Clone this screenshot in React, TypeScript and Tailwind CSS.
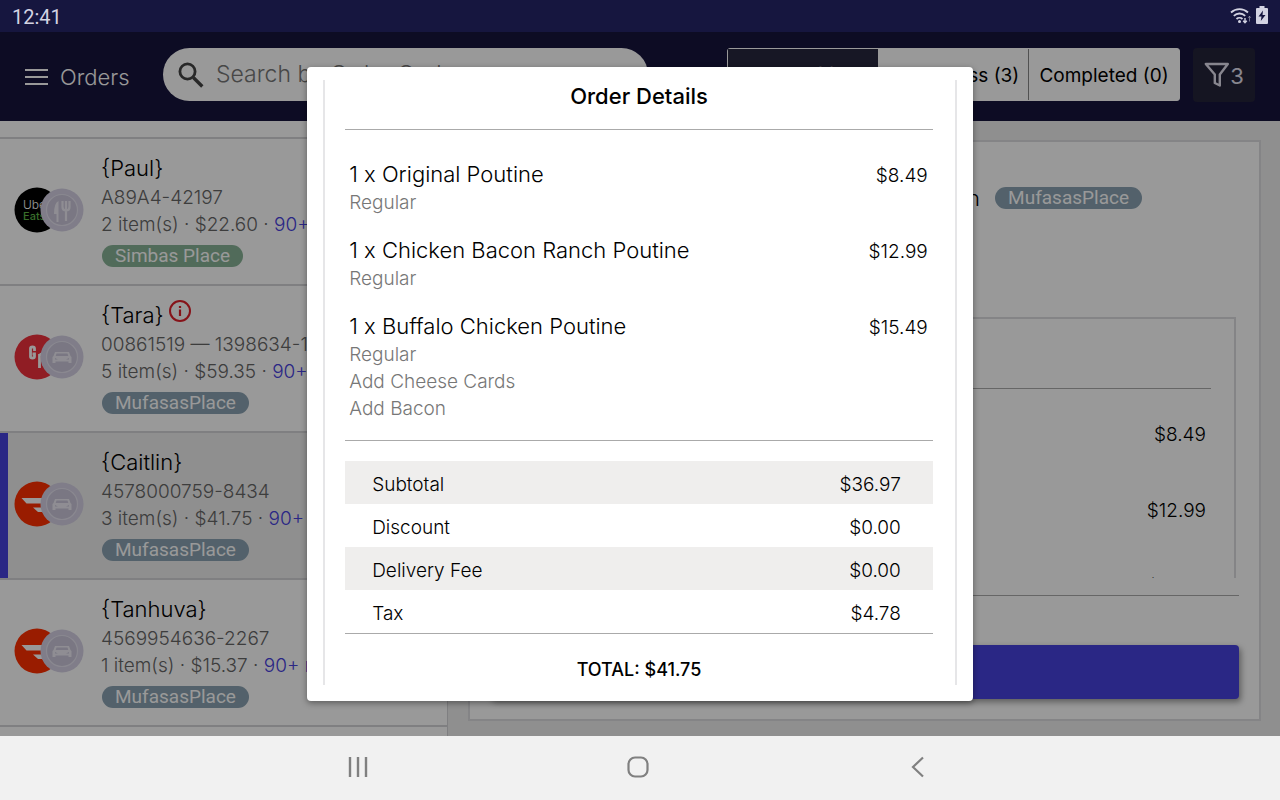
import type { ReactNode } from "react";
import clsx from "clsx";

type Item = { name: string; price: string; options: string[] };
type Order = {
  customer: string;
  code: string;
  count: number;
  total: string;
  store: string;
  storeColor: string;
  source: ReactNode;
  delivery: ReactNode;
  alert?: boolean;
  selected?: boolean;
};

const items: Item[] = [
  { name: "Original Poutine", price: "$8.49", options: ["Regular"] },
  { name: "Chicken Bacon Ranch Poutine", price: "$12.99", options: ["Regular"] },
  { name: "Buffalo Chicken Poutine", price: "$15.49", options: ["Regular", "Add Cheese Cards", "Add Bacon"] },
];

const totals = [
  ["Subtotal", "$36.97"],
  ["Discount", "$0.00"],
  ["Delivery Fee", "$0.00"],
  ["Tax", "$4.78"],
];

const orders: Order[] = [
  {
    customer: "{Paul}",
    code: "A89A4-42197",
    count: 2,
    total: "$22.60",
    store: "Simbas Place",
    storeColor: "bg-[#87b396]",
    source: <UberEatsLogo />,
    delivery: <DineInIcon />,
  },
  {
    customer: "{Tara}",
    code: "00861519 — 1398634-1",
    count: 5,
    total: "$59.35",
    store: "MufasasPlace",
    storeColor: "bg-[#8aa2b2]",
    source: <GrubhubLogo />,
    delivery: <CarIcon />,
    alert: true,
  },
  {
    customer: "{Caitlin}",
    code: "4578000759-8434",
    count: 3,
    total: "$41.75",
    store: "MufasasPlace",
    storeColor: "bg-[#8aa2b2]",
    source: <DoorDashLogo />,
    delivery: <CarIcon />,
    selected: true,
  },
  {
    customer: "{Tanhuva}",
    code: "4569954636-2267",
    count: 1,
    total: "$15.37",
    store: "MufasasPlace",
    storeColor: "bg-[#8aa2b2]",
    source: <DoorDashLogo />,
    delivery: <CarIcon />,
  },
];

export default function App() {
  return (
    <div className="flex h-screen flex-col overflow-hidden bg-[#f1f1f1] font-['Inter',sans-serif] font-light text-black">
      <StatusBar />
      <div className="relative flex min-h-0 flex-1 flex-col">
        <Header />
        <main className="flex min-h-0 flex-1 bg-[#efefef]">
          <OrderList />
          <OrderPanel />
        </main>
        <div className="absolute inset-0 flex items-center justify-center bg-black/40">
          <OrderDialog />
        </div>
      </div>
      <SystemNav />
    </div>
  );
}

function StatusBar() {
  return (
    <div className="flex h-8 shrink-0 items-center justify-between bg-[#16163f] px-3 pt-0.5 text-[#d3d3e2]">
      <span className="font-['Roboto',sans-serif] text-[20px] font-normal">12:41</span>
      <div className="flex items-center gap-1 pb-1">
        <svg width="22" height="20" viewBox="0 0 22 20" fill="none" stroke="currentColor" strokeWidth="1.8">
          <path d="M1 7.5a12.500 12.500 0 0 1 17 0" />
          <path d="M3.800 10.800a8.200 8.200 0 0 1 11.400 0" />
          <path d="M6.500 14a4.300 4.300 0 0 1 6 0" />
          <circle cx="9.500" cy="16.500" r="1.500" fill="currentColor" stroke="none" />
          <path d="M15 13v4.500M13.200 15.700l1.800 2 1.800-2" strokeWidth="1.400" />
          <path d="M19.500 16.500v-5M18.200 12.800l1.300-1.600 1.300 1.600" strokeWidth="1" opacity=".5" />
        </svg>
        <svg width="12" height="18" viewBox="0 0 12 18">
          <path d="M3.500 0h5v2H11a1 1 0 0 1 1 1v14a1 1 0 0 1-1 1H1a1 1 0 0 1-1-1V3a1 1 0 0 1 1-1h2.500z" fill="currentColor" />
          <path d="M7 4.500 2.500 10.500h3L4.800 15l4.700-6h-3z" fill="#16163f" />
        </svg>
      </div>
    </div>
  );
}

function Header() {
  return (
    <header className="flex h-[89px] shrink-0 items-start bg-[#16143c] pt-4 pr-[25px] pl-6 text-white">
      <button type="button" className="flex h-[58px] w-[139px] items-center gap-3 text-[22px]">
        <svg width="24" height="18" viewBox="0 0 24 18" stroke="currentColor" strokeWidth="2">
          <path d="M1 2h23M1 9h23M1 16h23" />
        </svg>
        Orders
      </button>
      <label className="flex h-[53px] w-[485px] items-center gap-3 rounded-full bg-white px-[15px] text-[#444]">
        <svg className="shrink-0" width="26" height="28" viewBox="0 0 26 28" fill="none" stroke="currentColor" strokeWidth="2.800">
          <circle cx="9.500" cy="10.500" r="7.600" />
          <path d="m15.300 16.500 9 9" strokeWidth="3.400" />
        </svg>
        <input
          type="search"
          aria-label="Search orders"
          placeholder="Search by Order Code"
          className="w-full bg-transparent text-[23px] outline-none placeholder:text-[#777]"
        />
      </label>
      <div className="mr-[13px] ml-auto flex h-[53px] w-[453px] rounded-[3px] border border-white bg-white text-[19px] font-normal text-black">
        <button type="button" className="flex-1 bg-[#27273f] pt-1 text-white">
          New (1)
        </button>
        <button type="button" className="flex-1 border-r border-[#888] pt-1">
          In Progress (3)
        </button>
        <button type="button" className="flex-1 pt-1 whitespace-nowrap">
          Completed (0)
        </button>
      </div>
      <button
        type="button"
        aria-label="Filters, 3 active"
        className="flex h-[54px] w-[62px] items-center justify-center rounded bg-[#242339] text-[22px] text-[#e2e0ee]"
      >
        <svg width="26" height="26" viewBox="0 0 26 26" fill="none" stroke="currentColor" strokeWidth="2.400">
          <path d="M1.800 2h22l-8 10.500v11l-5-2.500v-8.500z" strokeLinejoin="round" />
        </svg>
        <span className="pt-0.5 font-normal">3</span>
      </button>
    </header>
  );
}

function OrderList() {
  return (
    <section className="w-[35%] shrink-0 overflow-hidden border-r border-[#d4d4d8] bg-white pt-4">
      {orders.map((order) => (
        <OrderRow key={order.customer} order={order} />
      ))}
      <div className="border-t-2 border-[#d4d4d8]" />
    </section>
  );
}

function OrderRow({ order }: { order: Order }) {
  return (
    <article
      className={clsx(
        "relative flex h-[147px] items-center border-t-2 border-[#d4d4d8] pl-3.5",
        order.selected && "bg-[#efefef]",
      )}
    >
      {order.selected && <div className="absolute inset-y-0 left-0 w-2 bg-[#4741de]" />}
      <div className="mb-1 flex w-[87px] shrink-0 items-center">
        {order.source}
        <div className="-ml-5">{order.delivery}</div>
      </div>
      <div className="pt-[3px] text-[19px] leading-[27px] whitespace-nowrap text-[#666]">
        <div className="flex items-center gap-1 text-[22px] leading-[31px] text-black">
          {order.customer}
          {order.alert && (
            <svg className="-mt-2" width="24" height="24" viewBox="0 0 24 24" fill="none" stroke="#e0202b" strokeWidth="2">
              <circle cx="12" cy="12" r="10" />
              <path d="M12 10.500v6.500M12 7v2" strokeWidth="2.200" />
            </svg>
          )}
        </div>
        <div>{order.code}</div>
        <div>
          {order.count} item(s) · {order.total} · <span className="text-[#4741de]">90+ mins</span>
        </div>
        <div className="flex h-9 items-center pl-px">
          <StoreBadge color={order.storeColor}>{order.store}</StoreBadge>
        </div>
      </div>
    </article>
  );
}

function StoreBadge({ color, children }: { color: string; children: ReactNode }) {
  return (
    <span
      className={clsx(
        "rounded-full px-[13px] font-['Roboto',sans-serif] text-[19px] leading-[22px] font-normal text-white",
        color,
      )}
    >
      {children}
    </span>
  );
}

function OrderPanel() {
  return (
    <section className="mt-[19px] mr-[19px] mb-[15px] ml-5 flex min-w-0 flex-1 flex-col border-2 border-[#dcdce0] bg-white px-5 pb-5">
      <div className="flex h-[175px] shrink-0 justify-end pt-[34px] pr-[97px]">
        <div className="flex h-11 items-center gap-[15px] text-[22px]">
          Order for Caitlin
          <StoreBadge color="bg-[#8aa2b2]">MufasasPlace</StoreBadge>
        </div>
      </div>
      <div className="mr-[3px] ml-[3px] min-h-0 flex-1 overflow-hidden">
        <div className="border-2 border-[#dcdce0] px-[23px] pt-5">
          <OrderItems />
        </div>
      </div>
      <div className="mt-[17px] border-t border-[#aaa] pt-[49px]">
        <button
          type="button"
          className="block h-[54px] w-full rounded bg-[#4741de] text-[20px] text-white shadow-[2px_3px_6px_rgba(0,0,0,0.4)]"
        >
          Confirm
        </button>
      </div>
    </section>
  );
}

function OrderItems() {
  return (
    <>
      <h2 className="flex h-[49px] items-center justify-center pb-4 text-[22px] leading-[33px] font-medium">Order Details</h2>
      <ul className="border-y border-[#aaa] pt-[30px] pl-1">
        {items.map((item) => (
          <li key={item.name} className="flex justify-between pr-[5px] pb-5 last:pb-[18px]">
            <div>
              <div className="text-[22px] leading-[29px]">1 x {item.name}</div>
              {item.options.map((option) => (
                <div key={option} className="text-[19px] leading-[27px] text-[#777]">
                  {option}
                </div>
              ))}
            </div>
            <div className="text-[19px] leading-[32px]">{item.price}</div>
          </li>
        ))}
      </ul>
    </>
  );
}

function OrderDialog() {
  return (
    <div
      role="dialog"
      aria-modal="true"
      aria-label="Order Details"
      className="flex h-[90%] w-[52%] flex-col rounded bg-white px-4 pt-[13px] pb-4 shadow-[0_2px_6px_rgba(0,0,0,0.4)]"
    >
      <div className="min-h-0 flex-1 overflow-hidden border-x-2 border-[#e6e6e8] pr-[22px] pl-5">
        <OrderItems />
        <table className="mt-5 w-full border-b border-[#aaa] text-[19px]">
          <tbody>
            {totals.map(([label, value]) => (
              <tr key={label} className="h-[43px] odd:bg-[#efeeed]">
                <th scope="row" className="pt-1.5 pl-[27px] text-left font-light">
                  {label}
                </th>
                <td className="pt-1.5 pr-8 text-right">{value}</td>
              </tr>
            ))}
          </tbody>
        </table>
        <p className="pt-[22px] text-center text-[18px] leading-[28px] font-medium">TOTAL: $41.75</p>
      </div>
    </div>
  );
}

function SystemNav() {
  return (
    <nav className="flex h-16 shrink-0 items-center justify-center bg-[#f1f1f1] pr-[5px] pb-[3px] text-[#808080]">
      <div className="flex w-[584px] items-center justify-between">
        <button type="button" aria-label="Recent apps">
          <svg width="24" height="24" viewBox="0 0 24 24" stroke="currentColor" strokeWidth="2.400">
            <path d="M4 2v20M12 2v20M20 2v20" />
          </svg>
        </button>
        <button type="button" aria-label="Home">
          <svg width="24" height="24" viewBox="0 0 24 24" fill="none" stroke="currentColor" strokeWidth="2.200">
            <rect x="2.500" y="2.500" width="19" height="19" rx="6.500" />
          </svg>
        </button>
        <button type="button" aria-label="Back">
          <svg width="24" height="24" viewBox="0 0 24 24" fill="none" stroke="currentColor" strokeWidth="2.200">
            <path d="m17 2.500-10 9.500 10 9.500" />
          </svg>
        </button>
      </div>
    </nav>
  );
}

function UberEatsLogo() {
  return (
    <svg width="46" height="46" viewBox="0 0 46 46" className="shrink-0 font-['Inter',sans-serif]">
      <circle cx="23" cy="23" r="22.500" fill="#000" />
      <text x="9" y="22" fontSize="12" fill="#fff">
        Uber
      </text>
      <text x="9" y="33" fontSize="11" fontWeight="500" fill="#5fb848">
        Eats
      </text>
    </svg>
  );
}

function GrubhubLogo() {
  return (
    <svg width="46" height="46" viewBox="0 0 46 46" className="shrink-0">
      <circle cx="23" cy="23" r="22.500" fill="#f0313c" />
      <path
        d="M20.500 17v-2.500q0-1.500-2-1.500t-2 1.500v8q0 1.500 2 1.500t2-1.500V20h-2M25.500 34V20M25.500 21.500q1-1.500 3-1.500"
        fill="none"
        stroke="#fff"
        strokeWidth="2.800"
      />
    </svg>
  );
}

function DoorDashLogo() {
  return (
    <svg width="46" height="46" viewBox="0 0 46 46" className="shrink-0">
      <circle cx="23" cy="23" r="22.500" fill="#ff3000" />
      <path d="M7.500 17H30a8 8 0 0 1 8 8q0 6-6 6h-8l-5-4.500h11q1.500 0 1.500-2t-1.500-2H12.500z" fill="#fff" />
    </svg>
  );
}

function DeliveryDisc({ children }: { children: ReactNode }) {
  return (
    <svg width="44" height="44" viewBox="0 0 44 44" className="block">
      <circle cx="22" cy="22" r="21.500" fill="#d5d1e4" />
      <circle cx="22" cy="22" r="15.500" fill="#cbc7da" stroke="#e6e3f0" strokeWidth="1.200" />
      {children}
    </svg>
  );
}

function DineInIcon() {
  return (
    <DeliveryDisc>
      <path d="M18.500 13v21h-2v-8h-2.500q0-11 4.500-13z" fill="#eeecf5" />
      <path
        d="M22.500 13v6q0 3.500 3.500 3.500t3.500-3.500v-6M26 13v20"
        fill="none"
        stroke="#eeecf5"
        strokeWidth="2.200"
      />
    </DeliveryDisc>
  );
}

function CarIcon() {
  return (
    <DeliveryDisc>
      <path
        d="M15 17h14l1.500 4 1 1v6h-3v-1.500h-13V28h-3v-6l1-1zM16.500 18.500l-.8 2.500h12.600l-.8-2.500zM15 23v1.500h3zM29 23v1.500h-3z"
        fill="#eeecf5"
        fillRule="evenodd"
      />
    </DeliveryDisc>
  );
}
